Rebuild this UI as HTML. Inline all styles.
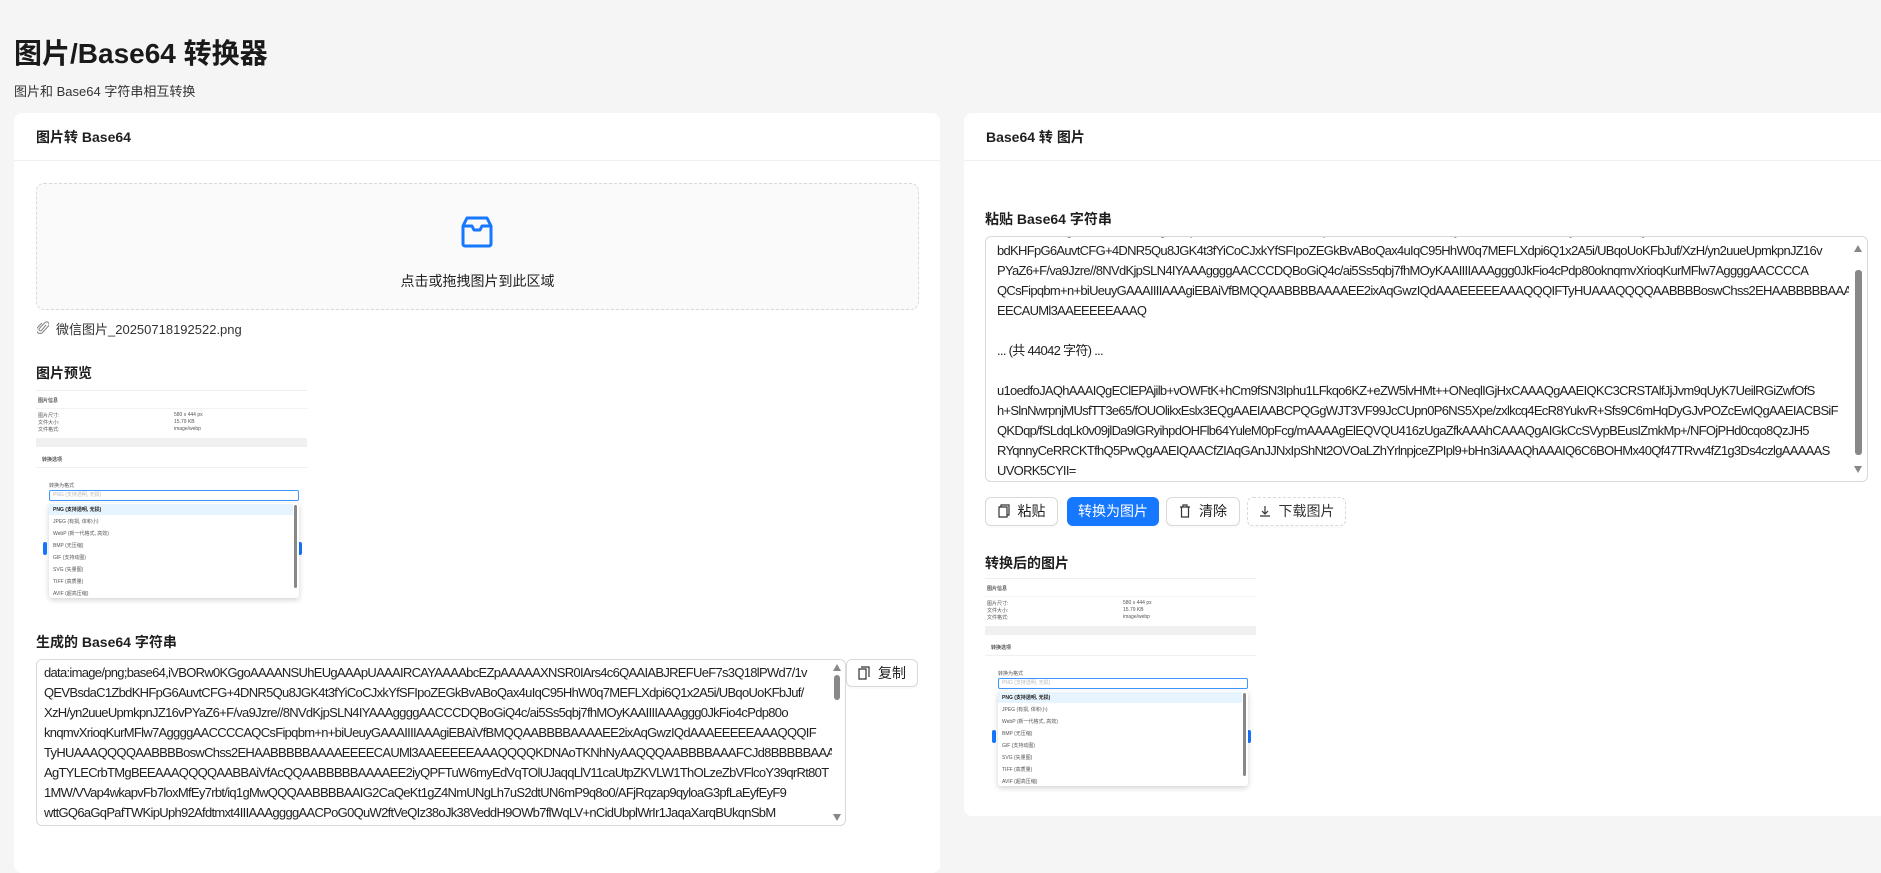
<!DOCTYPE html>
<html><head><meta charset="utf-8"><style>
*{box-sizing:border-box;margin:0;padding:0}
body{width:1881px;height:841px;overflow:hidden;background:#f5f5f5;font-family:"Liberation Sans","Noto Sans CJK SC",sans-serif;color:#1f1f1f;position:relative}
.abs{position:absolute}
.card{position:absolute;background:#fff;border-radius:8px}
.hd{position:absolute;left:0;right:0;top:0;height:48px;border-bottom:1px solid #f0f0f0}
.hd span{position:absolute;left:22px;top:14px;font-size:14px;font-weight:bold}
.h3{position:absolute;font-size:14px;font-weight:bold}
.ta{position:absolute;border:1px solid #d9d9d9;border-radius:6px;overflow:hidden;background:#fff}
.ta .ln{white-space:nowrap;font-size:13px;letter-spacing:-0.7px;line-height:20px;height:20px;overflow:hidden;color:#1f1f1f}
.btn{position:absolute;top:497px;height:29px;border:1px solid #d9d9d9;border-radius:6px;font-size:14px;line-height:27px;text-align:center;background:#fff;box-shadow:0 2px 0 rgba(0,0,0,.02)}
.btn svg{vertical-align:-2px;margin-right:8px}
.mini{position:absolute;width:271px;height:215px;background:#fff;font-size:5px;color:#555;overflow:hidden}
.mini div{position:absolute}
</style></head><body>
<div class="abs" style="left:14px;top:32px;font-size:28px;font-weight:bold;color:#1a1a1a">图片/Base64 转换器</div>
<div class="abs" style="left:14px;top:81px;font-size:13px;color:#333">图片和 Base64 字符串相互转换</div>

<div class="card" style="left:14px;top:113px;width:926px;height:760px">
  <div class="hd"><span>图片转 Base64</span></div>
</div>
<div class="abs" style="left:36px;top:183px;width:883px;height:127px;border:1px dashed #d9d9d9;border-radius:8px;background:#fafafa"></div>
<svg class="abs" style="left:461px;top:215px" width="32" height="34" viewBox="0 0 32 34"><path d="M6 3h20l4 8v18a2 2 0 0 1-2 2H4a2 2 0 0 1-2-2V11z M2 11h9l2 4h6l2-4h9" fill="none" stroke="#1677ff" stroke-width="3" stroke-linejoin="round"/></svg>
<div class="abs" style="left:36px;width:883px;top:271px;text-align:center;font-size:14px">点击或拖拽图片到此区域</div>
<svg class="abs" style="left:37px;top:320px" width="12" height="14" viewBox="0 0 12 14"><path d="M9 5L4.5 10.5a1.5 1.5 0 0 1-2.2-2L8 2.5a2.5 2.5 0 0 1 3.6 3.4L5.5 12.5a3.5 3.5 0 0 1-5-5L5 3" fill="none" stroke="#888" stroke-width="1.1"/></svg>
<div class="abs" style="left:56px;top:319px;font-size:13px;color:#333">微信图片_20250718192522.png</div>
<div class="h3" style="left:36px;top:363px">图片预览</div>

<div class="mini" style="left:36px;top:389px">
 <div style="left:0;right:0;top:1px;border-top:1px solid #eee"></div>
 <div style="left:2px;top:8px;font-weight:bold">图片信息</div>
 <div style="left:0;right:0;top:19px;border-top:1px solid #f3f3f3"></div>
 <div style="left:2px;top:23px">图片尺寸:</div><div style="left:138px;top:23px">580 x 444 px</div>
 <div style="left:2px;top:30px">文件大小:</div><div style="left:138px;top:30px">15.79 KB</div>
 <div style="left:2px;top:37px">文件格式:</div><div style="left:138px;top:37px">image/webp</div>
 <div style="left:0;right:0;top:49px;height:9px;background:#f0f0f0"></div>
 <div style="left:6px;top:67px;font-weight:bold">转换选项</div>
 <div style="left:0;right:0;top:78px;border-top:1px solid #f0f0f0"></div>
 <div style="left:13px;top:93px">转换为格式</div>
 <div style="left:13px;top:101px;width:250px;height:11px;border:1px solid #4096ff;border-radius:2px;color:#bbb;padding-left:3px;line-height:9px">PNG (支持透明, 无损)</div>
 <div style="left:7px;top:153px;width:4px;height:13px;background:#1677ff;border-radius:2px"></div>
 <div style="left:262px;top:153px;width:4px;height:13px;background:#1677ff;border-radius:2px"></div>
 <div style="left:13px;top:114px;width:250px;height:95px;background:#fff;box-shadow:0 2px 6px rgba(0,0,0,.18);border-radius:3px">
  <div style="left:0;right:6px;top:1px;height:11px;background:#e6f4ff"></div>
  <div style="left:4px;top:3px;color:#222;font-weight:bold">PNG (支持透明, 无损)</div>
  <div style="left:4px;top:15px">JPEG (有损, 体积小)</div>
  <div style="left:4px;top:27px">WebP (新一代格式, 高效)</div>
  <div style="left:4px;top:39px">BMP (无压缩)</div>
  <div style="left:4px;top:51px">GIF (支持动图)</div>
  <div style="left:4px;top:63px">SVG (矢量图)</div>
  <div style="left:4px;top:75px">TIFF (高质量)</div>
  <div style="left:4px;top:87px">AVIF (超高压缩)</div>
  <div style="left:245px;top:2px;width:3px;height:83px;background:#888;border-radius:2px"></div>
 </div>
</div>

<div class="h3" style="left:36px;top:632px">生成的 Base64 字符串</div>
<div class="ta" style="left:36px;top:659px;width:810px;height:167px">
 <div style="position:absolute;left:7px;top:3px;width:788px;overflow:hidden">
 <div class="ln">data:image/png;base64,iVBORw0KGgoAAAANSUhEUgAAApUAAAIRCAYAAAAbcEZpAAAAAXNSR0IArs4c6QAAIABJREFUeF7s3Q18lPWd7/1v</div>
 <div class="ln">QEVBsdaC1ZbdKHFpG6AuvtCFG+4DNR5Qu8JGK4t3fYiCoCJxkYfSFIpoZEGkBvABoQax4uIqC95HhW0q7MEFLXdpi6Q1x2A5i/UBqoUoKFbJuf/</div>
 <div class="ln">XzH/yn2uueUpmkpnJZ16vPYaZ6+F/va9Jzre//8NVdKjpSLN4IYAAAggggAACCCDQBoGiQ4c/ai5Ss5qbj7fhMOyKAAIIIIAAAggg0JkFio4cPdp80o</div>
 <div class="ln">knqmvXrioqKurMFlw7AggggAACCCCAQCsFipqbm+n+biUeuyGAAAIIIIAAAgiEBAiVfBMQQAABBBBAAAAEE2ixAqGwzIQdAAAEEEEEAAAQQQIF</div>
 <div class="ln">TyHUAAAQQQQAABBBBoswChss2EHAABBBBBAAAAEEEECAUMl3AAEEEEEAAAQQQQKDNAoTKNhNyAAQQQAABBBBAAAFCJd8BBBBBAAAEEEEA</div>
 <div class="ln">AgTYLECrbTMgBEEAAAQQQQAABBAiVfAcQQAABBBBBAAAAEE2iyQPFTuW6myEdVqTOlUJaqqLlV11caUtpZKVLW1ThOLzeZbVFlcoY39qrRt80T</div>
 <div class="ln">1MW/VVap4wkapvFb7loxMfEy7rbt/iq1gMwQQQAABBBBAAIG2CaQeKt1gZ4NmUNgLh7uS2dtUN6mP9q8o0/AFjRqzap9qyloaG3pfLaEyfEyF9</div>
 <div class="ln">wttGQ6aGqPafTWKipUph92Afdtmxt4IIIAAAggggAACPoG0QuW2ftVeQIz38oJk38VeddH9OWb7flWqLV+nCidUbplWrIr1JaqaXarqBUkqnSbM</div>
 </div>
 <div style="position:absolute;right:4px;top:4px;width:0;height:0;border-left:4px solid transparent;border-right:4px solid transparent;border-bottom:7px solid #888"></div>
 <div style="position:absolute;right:5px;top:15px;width:6px;height:25px;background:#888;border-radius:3px"></div>
 <div style="position:absolute;right:4px;bottom:4px;width:0;height:0;border-left:4px solid transparent;border-right:4px solid transparent;border-top:7px solid #888"></div>
</div>
<div class="btn" style="left:846px;top:659px;width:72px;height:28px;line-height:26px"><svg width="12" height="14" viewBox="0 0 12 14"><path d="M3 1h8v10 M1 3h7v10H1z" fill="none" stroke="#333" stroke-width="1.2"/></svg>复制</div>

<div class="card" style="left:964px;top:113px;width:940px;height:703px">
  <div class="hd"><span>Base64 转 图片</span></div>
</div>
<div class="h3" style="left:985px;top:209px">粘贴 Base64 字符串</div>
<div class="ta" style="left:985px;top:236px;width:883px;height:246px">
 <div style="position:absolute;left:11px;top:-16px;width:852px;overflow:hidden">
 <div class="ln">iVBORw0KGgoAAAANSUhEUgAAApUAAAIRCAYAAAAbcEZpAAAAAXNSR0IArs4c6QAAIABJREFUeF7s3Q18lPWd7/1vQEVBsdaC1Zb</div>
 <div class="ln">bdKHFpG6AuvtCFG+4DNR5Qu8JGK4t3fYiCoCJxkYfSFIpoZEGkBvABoQax4uIqC95HhW0q7MEFLXdpi6Q1x2A5i/UBqoUoKFbJuf/XzH/yn2uueUpmkpnJZ16v</div>
 <div class="ln">PYaZ6+F/va9Jzre//8NVdKjpSLN4IYAAAggggAACCCDQBoGiQ4c/ai5Ss5qbj7fhMOyKAAIIIIAAAggg0JkFio4cPdp80oknqmvXrioqKurMFlw7AggggAACCCCA</div>
 <div class="ln">QCsFipqbm+n+biUeuyGAAAIIIIAAAgiEBAiVfBMQQAABBBBAAAAEE2ixAqGwzIQdAAAEEEEEAAAQQQIFTyHUAAAQQQQAABBBBoswChss2EHAABBBBBAAAAEE</div>
 <div class="ln">EECAUMl3AAEEEEEAAAQ</div>
 <div class="ln"></div>
 <div class="ln">... (共 44042 字符) ...</div>
 <div class="ln"></div>
 <div class="ln">u1oedfoJAQhAAAIQgEClEPAjilb+vOWFtK+hCm9fSN3Iphu1LFkqo6KZ+eZW5lvHMt++ONeqlIGjHxCAAAQgAAEIQKC3CRSTAlfJjJvm9qUyK7UeilRGiZwfOfS</div>
 <div class="ln">h+SlnNwrpnjMUsfTT3e65/fOUOlikxEslx3EQgAAEIAABCPQGgWJT3VF99JcCUpn0P6NS5Xpe/zxlkcq4EcR8YukvR+Sfs9C6mHqDyGJvPOZcEwIQgAAEIACBSiF</div>
 <div class="ln">QKDqp/fSLdqLk0v09jlDa9lGRyihpdOHFlb64YuleM0pFcg/mAAAAgElEQVQU416zUgaZfkAAAhCAAAQgAIGkCcSVypBEusIZmkMp+/NFOjPHd0cqo8QzJH5</div>
 <div class="ln">RYqnnyCeRRCKTfhQ5PwQgAAEIQAACfZIAqGAnJJNxIpShNt2OVOaLZhYrlnpjceZPIpl9+bHn3iAAAQhAAAIQ6C6BOHMx40Qf47TRvv4fZ1g3Ds4czlgAAAAAS</div>
 <div class="ln">UVORK5CYII=</div>
 </div>
 <div style="position:absolute;right:5px;top:8px;width:0;height:0;border-left:4px solid transparent;border-right:4px solid transparent;border-bottom:7px solid #888"></div>
 <div style="position:absolute;right:5px;top:33px;width:7px;height:185px;background:#888;border-radius:3px"></div>
 <div style="position:absolute;right:5px;bottom:8px;width:0;height:0;border-left:4px solid transparent;border-right:4px solid transparent;border-top:7px solid #888"></div>
</div>
<div class="btn" style="left:985px;width:73px"><svg width="12" height="14" viewBox="0 0 12 14"><path d="M3 3V1h8v10H9 M1 3h8v10H1z" fill="none" stroke="#333" stroke-width="1.2"/></svg>粘贴</div>
<div class="btn" style="left:1067px;width:92px;background:#1677ff;border-color:#1677ff;color:#fff">转换为图片</div>
<div class="btn" style="left:1166px;width:74px"><svg width="12" height="14" viewBox="0 0 12 14"><path d="M1 3h10 M4 3V1h4v2 M2.5 3v10h7V3" fill="none" stroke="#333" stroke-width="1.2"/></svg>清除</div>
<div class="btn" style="left:1247px;width:99px;border-style:dashed;color:#333"><svg width="12" height="14" viewBox="0 0 12 14"><path d="M6 2v8 M3 7l3 3 3-3 M1 12h10" fill="none" stroke="#333" stroke-width="1.2"/></svg>下载图片</div>
<div class="h3" style="left:985px;top:553px">转换后的图片</div>

<div class="mini" style="left:985px;top:577px">
 <div style="left:0;right:0;top:1px;border-top:1px solid #eee"></div>
 <div style="left:2px;top:8px;font-weight:bold">图片信息</div>
 <div style="left:0;right:0;top:19px;border-top:1px solid #f3f3f3"></div>
 <div style="left:2px;top:23px">图片尺寸:</div><div style="left:138px;top:23px">580 x 444 px</div>
 <div style="left:2px;top:30px">文件大小:</div><div style="left:138px;top:30px">15.79 KB</div>
 <div style="left:2px;top:37px">文件格式:</div><div style="left:138px;top:37px">image/webp</div>
 <div style="left:0;right:0;top:49px;height:9px;background:#f0f0f0"></div>
 <div style="left:6px;top:67px;font-weight:bold">转换选项</div>
 <div style="left:0;right:0;top:78px;border-top:1px solid #f0f0f0"></div>
 <div style="left:13px;top:93px">转换为格式</div>
 <div style="left:13px;top:101px;width:250px;height:11px;border:1px solid #4096ff;border-radius:2px;color:#bbb;padding-left:3px;line-height:9px">PNG (支持透明, 无损)</div>
 <div style="left:7px;top:153px;width:4px;height:13px;background:#1677ff;border-radius:2px"></div>
 <div style="left:262px;top:153px;width:4px;height:13px;background:#1677ff;border-radius:2px"></div>
 <div style="left:13px;top:114px;width:250px;height:95px;background:#fff;box-shadow:0 2px 6px rgba(0,0,0,.18);border-radius:3px">
  <div style="left:0;right:6px;top:1px;height:11px;background:#e6f4ff"></div>
  <div style="left:4px;top:3px;color:#222;font-weight:bold">PNG (支持透明, 无损)</div>
  <div style="left:4px;top:15px">JPEG (有损, 体积小)</div>
  <div style="left:4px;top:27px">WebP (新一代格式, 高效)</div>
  <div style="left:4px;top:39px">BMP (无压缩)</div>
  <div style="left:4px;top:51px">GIF (支持动图)</div>
  <div style="left:4px;top:63px">SVG (矢量图)</div>
  <div style="left:4px;top:75px">TIFF (高质量)</div>
  <div style="left:4px;top:87px">AVIF (超高压缩)</div>
  <div style="left:245px;top:2px;width:3px;height:83px;background:#888;border-radius:2px"></div>
 </div>
</div>
</body></html>
